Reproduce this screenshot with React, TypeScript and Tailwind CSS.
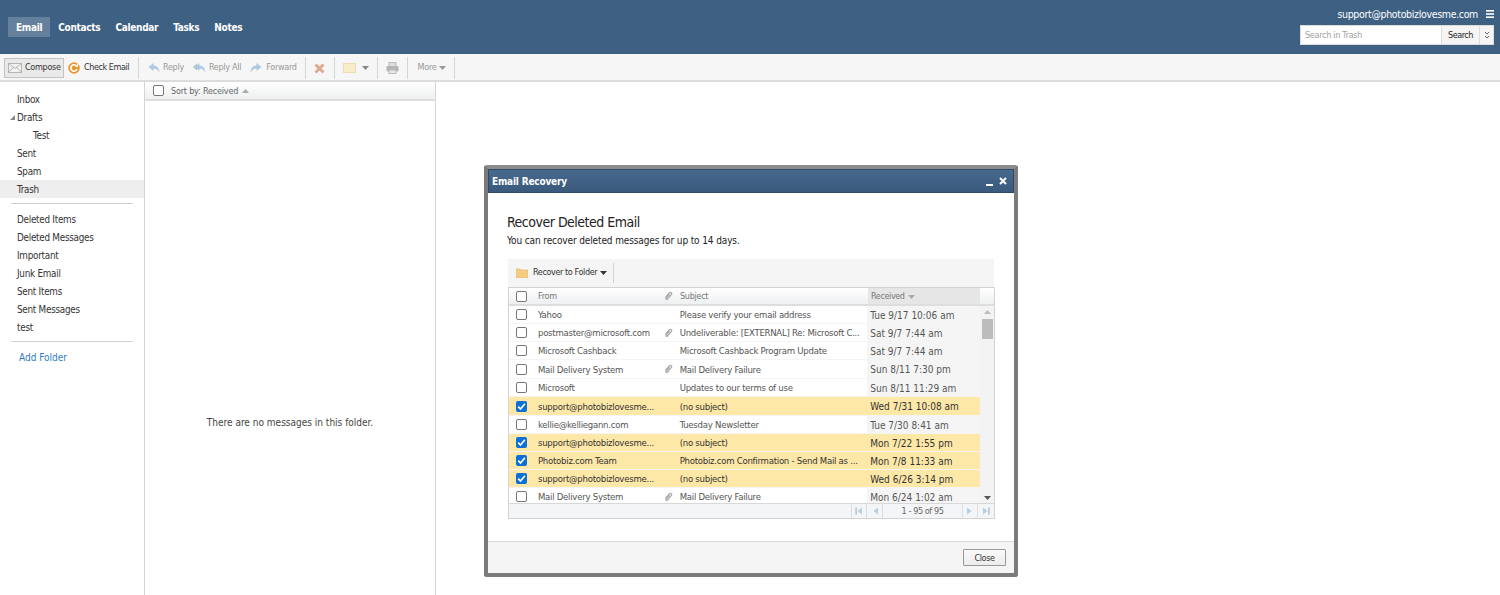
import React from "react";

const FONT = "[font-family:'DejaVu_Sans_Condensed','DejaVu_Sans',Tahoma,sans-serif] [font-stretch:condensed]";

function Box({ checked }: { checked?: boolean }) {
  if (checked)
    return (
      <span className="flex h-[11px] w-[11px] items-center justify-center rounded-[2px] bg-[#0a6fd8]">
        <svg width="9" height="9" viewBox="0 0 9 9"><path d="M1.2 4.6 L3.5 7 L7.9 1.8" stroke="#fff" strokeWidth="1.7" fill="none" /></svg>
      </span>
    );
  return <span className="block h-[11px] w-[11px] rounded-[2px] border border-[#777] bg-white" />;
}

function Clip() {
  return (
    <svg width="9" height="10" viewBox="0 0 9 10" fill="none" stroke="#a9a9a9" strokeWidth="1.3">
      <path d="M1.5 6.5 L5.5 1.8 C6.6 .7 8.4 2.2 7.4 3.4 L3.4 8 C2.7 8.8 1.4 7.9 2.1 6.9 L5.4 3.4" />
    </svg>
  );
}

function Caret({ up, color = "#666" }: { up?: boolean; color?: string }) {
  return (
    <svg width="7" height="4" viewBox="0 0 7 4" className="shrink-0">
      <path d={up ? "M0 4 L3.5 0 L7 4 Z" : "M0 0 L7 0 L3.5 4 Z"} fill={color} />
    </svg>
  );
}

function Reply({ double, flip }: { double?: boolean; flip?: boolean }) {
  return (
    <svg width="13" height="10" viewBox="0 0 13 10" className="shrink-0" style={flip ? { transform: "scaleX(-1)" } : undefined}>
      {double && <path d="M4 0.5 L0 4 L4 7.5 Z" fill="#b4c4b4" />}
      <path d="M6.5 0 L1.5 4 L6.5 8 V5.5 C9 5.5 11 7 12.5 9.5 C12.2 5.5 10 2.6 6.5 2.6 Z" fill="#aec8e6" />
    </svg>
  );
}

const folders1 = ["Sent", "Spam"];
const folders2 = ["Deleted Items", "Deleted Messages", "Important", "Junk Email", "Sent Items", "Sent Messages", "test"];

const rows: { from: string; clip?: boolean; subject: string; date: string; sel?: boolean; h: string }[] = [
  { from: "Yahoo", subject: "Please verify your email address", date: "Tue 9/17 10:06 am", h: "h-[18px]" },
  { from: "postmaster@microsoft.com", clip: true, subject: "Undeliverable: [EXTERNAL] Re: Microsoft C...", date: "Sat 9/7 7:44 am", h: "h-[18px]" },
  { from: "Microsoft Cashback", subject: "Microsoft Cashback Program Update", date: "Sat 9/7 7:44 am", h: "h-[18px]" },
  { from: "Mail Delivery System", clip: true, subject: "Mail Delivery Failure", date: "Sun 8/11 7:30 pm", h: "h-[19px]" },
  { from: "Microsoft", subject: "Updates to our terms of use", date: "Sun 8/11 11:29 am", h: "h-[18px]" },
  { from: "support@photobizlovesme...", subject: "(no subject)", date: "Wed 7/31 10:08 am", sel: true, h: "h-[19px]" },
  { from: "kellie@kelliegann.com", subject: "Tuesday Newsletter", date: "Tue 7/30 8:41 am", h: "h-[18px]" },
  { from: "support@photobizlovesme...", subject: "(no subject)", date: "Mon 7/22 1:55 pm", sel: true, h: "h-[18px]" },
  { from: "Photobiz.com Team", subject: "Photobiz.com Confirmation - Send Mail as ...", date: "Mon 7/8 11:33 am", sel: true, h: "h-[18px]" },
  { from: "support@photobizlovesme...", subject: "(no subject)", date: "Wed 6/26 3:14 pm", sel: true, h: "h-[18px]" },
  { from: "Mail Delivery System", clip: true, subject: "Mail Delivery Failure", date: "Mon 6/24 1:02 am", h: "h-[18px]" },
];

function FolderRow({ label }: { label: string }) {
  return <div className="flex h-[18px] items-center pl-[17px] pt-[2px]">{label}</div>;
}

function Pager({ first, flip }: { first?: boolean; flip?: boolean }) {
  return (
    <svg width="8" height="8" viewBox="0 0 8 8" style={flip ? { transform: "scaleX(-1)" } : undefined}>
      <path d="M7 0.5 V7.5 L2.5 4 Z" fill="#b9cfe0" />
      {first && <rect x="0.5" y="0.5" width="1.2" height="7" fill="#9fb5c6" />}
    </svg>
  );
}

export default function App() {
  return (
    <div className={`relative flex h-[595px] w-[1500px] flex-col overflow-hidden bg-white text-[9.8px] tracking-[-0.25px] text-[#333] ${FONT}`}>
      {/* Header */}
      <header className="flex h-[54px] shrink-0 justify-between bg-[#3e6083]">
        <nav className="flex items-start gap-[15px] pl-[8px] pt-[17px] text-[10px] font-bold tracking-[-0.3px] text-white">
          <span className="flex h-[20px] items-center bg-[#64809d] px-[8px]">Email</span>
          <span className="-ml-[7px] flex h-[20px] items-center">Contacts</span>
          <span className="flex h-[20px] items-center">Calendar</span>
          <span className="flex h-[20px] items-center">Tasks</span>
          <span className="flex h-[20px] items-center">Notes</span>
        </nav>
        <div className="flex flex-col items-end pr-[6px] pt-[7px]">
          <div className="flex h-[13px] items-center gap-[8px] text-[10.5px] tracking-[-0.33px] text-white">
            <span className="translate-y-[1px]">support@photobizlovesme.com</span>
            <svg width="8" height="8" viewBox="0 0 8 8" fill="#fff"><rect width="8" height="1.6" /><rect y="3.2" width="8" height="1.6" /><rect y="6.4" width="8" height="1.6" /></svg>
          </div>
          <div className="mt-[5px] flex h-[20px] w-[194px] bg-white">
            <span className="flex flex-1 items-center border border-[#ddd] pl-[4px] pt-[2px] text-[9px] tracking-[-0.3px] text-[#a3a3a3]">Search in Trash</span>
            <span className="flex w-[37px] items-center justify-center border-y border-[#ddd] bg-[#f5f5f5] pt-[1px] text-[9px] tracking-[-0.5px] text-[#222]">Search</span>
            <span className="flex w-[15px] items-center justify-center border border-[#ddd] bg-[#f5f5f5]">
              <svg width="6" height="8" viewBox="0 0 6 8" fill="none" stroke="#666"><path d="M1 1 L3 3 L5 1 M1 5 L3 7 L5 5" /></svg>
            </span>
          </div>
        </div>
      </header>

      {/* Toolbar */}
      <div className="flex h-[28px] shrink-0 items-center border-b-2 border-[#dcdcdc] bg-[#f6f6f6] pl-[4px] pt-[2px] text-[9px] tracking-[-0.3px] text-[#999]">
        <span className="flex h-[20px] w-[60px] items-center gap-[3px] border border-[#c4c4c4] bg-[#e9e9e9] pl-[3px] text-[#333]">
          <svg width="14" height="10" viewBox="0 0 14 10" fill="#f1f1f1" stroke="#a8a8a8" strokeWidth=".8" className="shrink-0"><rect x=".5" y=".5" width="13" height="9" /><path d="M.5 .5 L7 5.5 L13.5 .5 M.5 9.5 L5.4 4.2 M13.5 9.5 L8.6 4.2" fill="none" /></svg>
          Compose
        </span>
        <span className="ml-[4px] flex items-center gap-[4px] tracking-[-0.45px] text-[#333]">
          <svg width="12" height="12" viewBox="0 0 12 12" className="shrink-0"><circle cx="6" cy="6" r="5.8" fill="#e8962e" /><path d="M8.5 4 A3.2 3.2 0 1 0 9 7" stroke="#fff" strokeWidth="1.6" fill="none" /><path d="M7 4.5 L10 1.5 L10 5 Z" fill="#fff" /></svg>
          Check Email
        </span>
        <span className="ml-[9px] mr-[8px] h-[22px] w-px bg-[#d6d6d6]" />
        <span className="flex items-center gap-[3px]"><Reply />Reply</span>
        <span className="ml-[9px] flex items-center gap-[3px]"><Reply double />Reply All</span>
        <span className="ml-[9px] flex items-center gap-[3px]"><Reply flip />Forward</span>
        <span className="ml-[8px] mr-[8px] h-[22px] w-px bg-[#d6d6d6]" />
        <svg width="11" height="11" viewBox="0 0 11 11" className="shrink-0"><path d="M1.5 1.5 L9.5 9.5 M9.5 1.5 L1.5 9.5" stroke="#e0a88e" strokeWidth="2.8" /></svg>
        <span className="ml-[9px] mr-[8px] h-[22px] w-px bg-[#d6d6d6]" />
        <span className="h-[10px] w-[13px] border border-[#eddcb3] bg-[#f9eccb]" />
        <span className="ml-[6px] flex"><Caret color="#888" /></span>
        <span className="ml-[8px] mr-[8px] h-[22px] w-px bg-[#d6d6d6]" />
        <svg width="13" height="12" viewBox="0 0 13 12" className="shrink-0"><rect x="3" y="0.5" width="7" height="4" fill="#ddd" stroke="#bbb" /><rect x=".5" y="4" width="12" height="5.5" rx="1" fill="#b5b5b5" /><rect x="3" y="8" width="7" height="3.5" fill="#e8e8e8" stroke="#bbb" /></svg>
        <span className="ml-[8px] mr-[10px] h-[22px] w-px bg-[#d6d6d6]" />
        <span className="flex items-center gap-[3px]">More<Caret color="#999" /></span>
        <span className="ml-[8px] h-[22px] w-px bg-[#d6d6d6]" />
      </div>

      {/* Body */}
      <div className="flex min-h-0 flex-1">
        <aside className="w-[145px] shrink-0 border-r border-[#d4d4d4] pt-[8px]">
          <FolderRow label="Inbox" />
          <div className="relative">
            <span className="absolute left-[10px] top-[7px]"><svg width="5" height="5" viewBox="0 0 5 5"><path d="M5 0 V5 H0 Z" fill="#888" /></svg></span>
            <FolderRow label="Drafts" />
          </div>
          <div className="flex h-[18px] items-center pl-[33px] pt-[2px]">Test</div>
          {folders1.map((f) => <FolderRow key={f} label={f} />)}
          <div className="flex h-[18px] items-center bg-[#eeeeee] pl-[17px] pt-[2px]">Trash</div>
          <div className="mx-[11px] mb-[6px] mt-[5px] h-px bg-[#cfcfcf]" />
          {folders2.map((f) => <FolderRow key={f} label={f} />)}
          <div className="mx-[11px] mb-[6px] mt-[5px] h-px bg-[#cfcfcf]" />
          <div className="flex h-[18px] items-center pl-[19px] text-[10px] tracking-normal text-[#2f7cc4]">Add Folder</div>
        </aside>

        <section className="flex w-[291px] shrink-0 flex-col border-r border-[#d4d4d4]">
          <div className="flex h-[19px] shrink-0 items-center border-b-2 border-[#dedede] bg-gradient-to-b from-white to-[#eef0f1] pl-[8px]">
            <Box />
            <span className="ml-[7px] mr-[4px] pt-[2px] text-[9px] tracking-[-0.2px] text-[#666]">Sort by: Received</span>
            <Caret up color="#aaa" />
          </div>
          <div className="flex flex-1 items-center justify-center pt-[148px] text-[10px] tracking-normal text-[#444]">There are no messages in this folder.</div>
        </section>
        <main className="flex-1" />
      </div>

      {/* Modal */}
      <div className="absolute left-[484px] top-[165px] flex h-[412px] w-[534px] flex-col rounded-[3px] border-[4px] border-[#7b7b7b] border-t-[#8d8d8d] bg-white">
        <div className="flex h-[24px] shrink-0 items-center justify-between border border-[#2d4a68] bg-gradient-to-b from-[#47698e] to-[#3a5a7c] pl-[3px] pr-[6px]">
          <span className="text-[10px] font-bold tracking-[-0.2px] text-white">Email Recovery</span>
          <span className="flex items-center gap-[6px]">
            <span className="mt-[7px] h-[2px] w-[7px] bg-white" />
            <svg width="8" height="8" viewBox="0 0 8 8"><path d="M1 1 L7 7 M7 1 L1 7" stroke="#fff" strokeWidth="2" /></svg>
          </span>
        </div>

        <div className="flex min-h-0 flex-1 flex-col px-[19px]">
          <h1 className="mt-[20px] h-[19px] text-[14px] leading-[19px] tracking-[-0.5px] text-[#222]">Recover Deleted Email</h1>
          <p className="mt-[1px] h-[16px] text-[10px] leading-[16px] tracking-[-0.12px] text-[#222]">You can recover deleted messages for up to 14 days.</p>

          <div className="ml-[1px] mt-[10px] flex h-[28px] w-[486px] shrink-0 items-center bg-[#f5f5f5] pb-[1px] pl-[8px] text-[9px] tracking-[-0.4px]">
            <svg width="12" height="10" viewBox="0 0 12 10" className="shrink-0"><path d="M0 1 H4 L5 2 H12 V10 H0 Z" fill="#f4cd81" stroke="#e2b669" strokeWidth=".6" /></svg>
            <span className="ml-[5px] mr-[3px] text-[#333]">Recover to Folder</span>
            <Caret color="#333" />
            <span className="ml-[6px] h-[20px] w-px bg-[#d4d4d4]" />
          </div>

          <div className="ml-[1px] flex h-[232px] w-[487px] shrink-0 flex-col border border-[#d3d3d3] text-[9.5px]">
            <div className="flex h-[18px] shrink-0 items-center border-b-2 border-[#dedede] bg-gradient-to-b from-white to-[#eef0f1] text-[9px] tracking-[-0.3px] text-[#777]">
              <span className="flex w-[29px] pl-[7px]"><Box /></span>
              <span className="w-[126px] pt-[2px]">From</span>
              <span className="w-[16px]"><Clip /></span>
              <span className="w-[188px] pt-[2px]">Subject</span>
              <span className="flex h-full w-[112px] items-center gap-[3px] bg-[#e6e6e6] pl-[3px] pt-[2px] tracking-[-0.4px]">Received<Caret color="#aaa" /></span>
            </div>
            <div className="flex min-h-0 flex-1">
              <div className="min-w-0 flex-1 overflow-hidden">
                {rows.map((r, i) => (
                  <div key={i} className={`flex ${r.h} items-center whitespace-nowrap border-b border-[#f4f4f4] ${r.sel ? "bg-[#fee8a8] text-[#333]" : "bg-white text-[#555]"}`}>
                    <span className="flex w-[29px] pl-[7px]"><Box checked={r.sel} /></span>
                    <span className="w-[126px] pt-[2px]">{r.from}</span>
                    <span className="w-[16px]">{r.clip && <Clip />}</span>
                    <span className="w-[188px] pt-[2px]">{r.subject}</span>
                    <span className={`flex h-full w-[113px] items-center pl-[3px] pt-[1px] text-[10px] tracking-normal ${r.sel ? "" : "bg-[#f5f5f5]"}`}>{r.date}</span>
                  </div>
                ))}
              </div>
              <div className="flex w-[14px] shrink-0 flex-col items-center bg-[#f3f3f3] pt-[4px]">
                <Caret up color="#bbb" />
                <span className="mt-[5px] h-[20px] w-[11px] bg-[#bcbcbc]" />
                <span className="mb-[3px] mt-auto"><Caret color="#555" /></span>
              </div>
            </div>
            <div className="flex h-[15px] shrink-0 items-center justify-end border-t border-[#d8d8d8] bg-[#f3f5f6] text-[9px] tracking-[-0.4px] text-[#666]">
              <span className="flex h-full w-[16px] items-center justify-center border-x border-[#dedede]"><Pager first /></span>
              <span className="flex h-full w-[16px] items-center justify-center border-r border-[#dedede]"><Pager /></span>
              <span className="flex h-full w-[79px] items-center justify-center pt-[2px]">1 - 95 of 95</span>
              <span className="flex h-full w-[16px] items-center justify-center border-x border-[#dedede]"><Pager flip /></span>
              <span className="flex h-full w-[16px] items-center justify-center"><Pager first flip /></span>
            </div>
          </div>
        </div>

        <div className="flex h-[32px] shrink-0 items-center justify-end border-t border-[#dcdcdc] bg-[#f5f5f5] pr-[8px]">
          <span className="flex h-[17px] w-[43px] items-center justify-center rounded-[1px] border border-[#999] bg-gradient-to-b from-[#fafafa] to-[#ececec] pt-[2px] text-[9px] tracking-[-0.4px] text-[#333]">Close</span>
        </div>
      </div>
    </div>
  );
}
